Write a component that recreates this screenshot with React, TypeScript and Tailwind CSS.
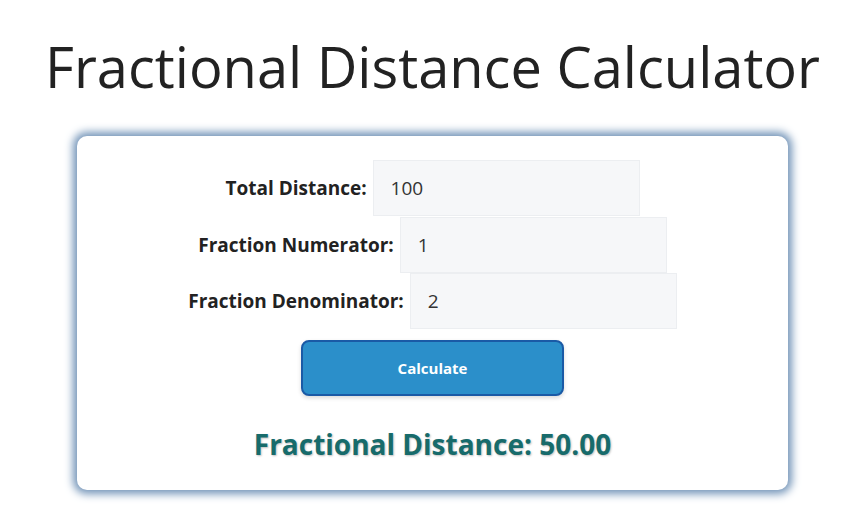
import { useState } from "react"

const font = { fontFamily: '"Open Sans", "Noto Sans", sans-serif' }

function Field({ label, value, onChange }: { label: string; value: string; onChange: (v: string) => void }) {
  return (
    <div className="flex items-center justify-center">
      <label className="text-[19px] font-bold text-[#222] mr-[6px]">{label}</label>
      <input
        value={value}
        onChange={(e) => onChange(e.target.value)}
        className="w-[267px] h-[56px] bg-[#f6f7f9] border border-[#eceef1] pl-[17px] text-[19px] text-[#333] outline-none"
      />
    </div>
  )
}

export default function App() {
  const [total, setTotal] = useState("100")
  const [num, setNum] = useState("1")
  const [den, setDen] = useState("2")
  const [result, setResult] = useState("50.00")

  const calc = () => {
    const t = parseFloat(total), n = parseFloat(num), d = parseFloat(den)
    if (isNaN(t) || isNaN(n) || isNaN(d) || d === 0) return setResult("—")
    setResult(((t * n) / d).toFixed(2))
  }

  return (
    <div className="min-h-screen bg-white pl-[18px]" style={font}>
      <h1 className="text-center text-[56px] leading-none font-normal text-[#222] pt-[38px]">Fractional Distance Calculator</h1>
      <div className="mx-auto mt-[42px] w-[711px] bg-white rounded-[10px] shadow-[0_0_9px_4px_#7394b8] pt-[24px] pb-[27px]">
        <Field label="Total Distance:" value={total} onChange={setTotal} />
        <div className="mt-[1px]">
          <Field label="Fraction Numerator:" value={num} onChange={setNum} />
        </div>
        <Field label="Fraction Denominator:" value={den} onChange={setDen} />
        <div className="flex justify-center mt-[11px]">
          <button
            onClick={calc}
            className="w-[263px] h-[56px] bg-[#2b8fca] border-2 border-[#1a5aa6] rounded-[8px] text-white text-[15px] font-bold shadow-[0_2px_4px_rgba(0,0,0,0.15)]"
          >
            Calculate
          </button>
        </div>
        <div className="text-center mt-[29px] text-[28px] leading-[38px] font-bold text-[#176b6b] [text-shadow:1px_1px_2px_rgba(0,0,0,0.25)]">
          Fractional Distance: {result}
        </div>
      </div>
    </div>
  )
}
